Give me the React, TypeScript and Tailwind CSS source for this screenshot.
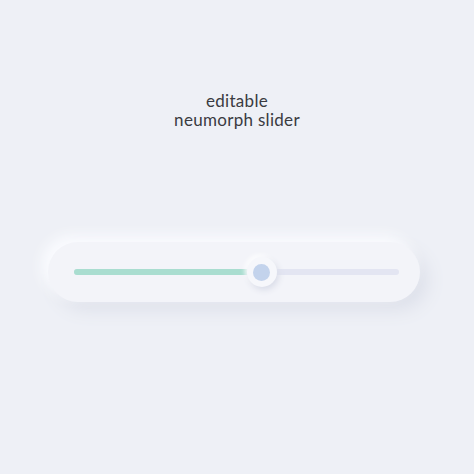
import React, { useState } from "react";

function App() {
  const [value, setValue] = useState(57.8);

  return (
    <div
      className="w-[474px] h-[474px] bg-[#eef0f6] flex flex-col items-center"
      style={{ fontFamily: "Lato, 'Noto Sans', sans-serif" }}
    >
      <div className="mt-[91px] flex flex-col items-center text-[17px] leading-[19px] font-normal text-[#3a3b41] tracking-[0.3px]">
        <span>editable</span>
        <span>neumorph slider</span>
      </div>

      {/* pill body */}
      <div className="mt-[113px] ml-[-6px] w-[372px] h-[60px] rounded-full bg-[#f3f4f9] shadow-[-6px_-6px_14px_#fbfcff,8px_8px_18px_#dde0ea] flex items-center pl-[26px] pr-[21px]">
        <div className="relative w-full h-[6px] rounded-full bg-[#e3e5f2]">
          <div
            className="absolute left-0 top-0 h-full rounded-full bg-[#a9ddd0]"
            style={{ width: `${value}%` }}
          />
          <div
            className="absolute top-1/2 w-[30px] h-[30px] -translate-x-1/2 -translate-y-1/2 rounded-full bg-[#f6f7fb] shadow-[2px_3px_6px_#d9dce8,-2px_-2px_5px_#ffffff] flex items-center justify-center"
            style={{ left: `${value}%` }}
          >
            <div className="w-[17px] h-[17px] rounded-full bg-[#c3d3ec]" />
          </div>
          <input
            type="range"
            min={0}
            max={100}
            step={0.1}
            value={value}
            onChange={(e) => setValue(Number(e.target.value))}
            className="absolute inset-0 -top-3 h-[30px] w-full opacity-0 cursor-pointer"
          />
        </div>
      </div>
    </div>
  );
}

export default App;
